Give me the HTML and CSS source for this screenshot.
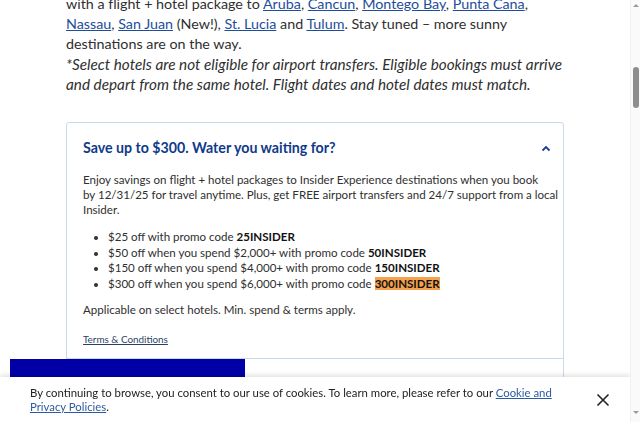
FILE: index.html
```html
<!DOCTYPE html>
<html lang="en">
<head>
<meta charset="utf-8">
<title>Insider Experience</title>
<link rel="stylesheet" href="styles.css">
</head>
<body>
<div class="page">
  <main class="content">
    <p class="intro">with a flight + hotel package to <a href="#">Aruba</a>, <a href="#">Cancun</a>, <a href="#">Montego Bay</a>, <a href="#">Punta Cana</a>, <a href="#">Nassau</a>, <a href="#">San Juan</a> (New!), <a href="#">St. Lucia</a> and <a href="#">Tulum</a>. Stay tuned – more sunny destinations are on the way.</p>
    <p class="note">*Select hotels are not eligible for airport transfers. Eligible bookings must arrive and depart from the same hotel. Flight dates and hotel dates must match.</p>

    <section class="accordion">
      <div class="acc-item">
        <div class="acc-head">
          <h2>Save up to $300. Water you waiting for?</h2>
          <svg class="chev" width="10" height="7" viewBox="0 0 10 7"><path d="M1.5 5.5 L5 2 L8.5 5.5" fill="none" stroke="#1a3f8f" stroke-width="1.8"/></svg>
        </div>
        <div class="acc-body">
          <p>Enjoy savings on flight + hotel packages to Insider Experience destinations when you book<br>by 12/31/25 for travel anytime. Plus, get FREE airport transfers and 24/7 support from a local Insider.</p>
          <ul>
            <li>$25 off with promo code <b>25INSIDER</b></li>
            <li>$50 off when you spend $2,000+ with promo code <b>50INSIDER</b></li>
            <li>$150 off when you spend $4,000+ with promo code <b>150INSIDER</b></li>
            <li>$300 off when you spend $6,000+ with promo code <b class="hl">300INSIDER</b></li>
          </ul>
          <p>Applicable on select hotels. Min. spend &amp; terms apply.</p>
          <a class="terms" href="#">Terms &amp; Conditions</a>
        </div>
      </div>
      <div class="acc-item next"></div>
    </section>
  </main>
</div>

<div class="chat-btn"></div>

<div class="cookie">
  <p>By continuing to browse, you consent to our use of cookies. To learn more, please refer to our <a href="#">Cookie and Privacy Policies</a>.</p>
  <button class="close" aria-label="Close">
    <svg width="14" height="14" viewBox="0 0 14 14"><path d="M1.5 1.5 L12.5 12.5 M12.5 1.5 L1.5 12.5" stroke="#222" stroke-width="1.6" fill="none"/></svg>
  </button>
</div>

<div class="scrollbar">
  <span class="arrow up"></span>
  <span class="thumb"></span>
  <span class="arrow down"></span>
</div>
</body>
</html>
```

FILE: styles.css
```css
* { box-sizing: border-box; }
html, body {
  margin: 0;
  padding: 0;
  height: 100%;
  overflow: hidden;
  background: #fff;
}
body {
  font-family: Lato, "Open Sans", sans-serif;
  color: #2f2f2f;
}
.page {
  width: 630px;
}
.content {
  margin-top: -6px;
  padding-left: 66px;
  width: 572px;
}
.content p { margin: 0; }
.intro {
  font-size: 14.3px;
  line-height: 20px;
}
.intro a {
  color: #1e4d9b;
}
.note {
  margin-top: 7px;
  font-size: 15.3px;
  line-height: 20px;
  font-style: italic;
}
.accordion {
  margin-top: 28px;
  width: 498px;
}
.acc-item {
  border: 1px solid #c8dbec;
  border-radius: 3px 3px 0 0;
  padding: 15px 0 12px 16px;
}
.acc-item.next {
  border-top: 1px solid #c8dbec;
  border-bottom: none;
  border-radius: 0;
  margin-top: -1px;
  height: 40px;
}
.acc-head {
  display: flex;
  align-items: center;
  justify-content: space-between;
}
.acc-head h2 {
  margin: 0;
  font-size: 14.2px;
  line-height: 20px;
  font-weight: 700;
  color: #0f3a8a;
}
.chev { margin-right: 12px; }
.acc-body {
  margin-top: 14px;
  font-size: 11.55px;
  line-height: 15px;
}
.acc-body ul {
  margin: 12px 0 11px;
  padding-left: 25px;
  line-height: 15.5px;
}
.acc-body b { font-weight: 700; color: #111; }
.hl { background: #f6a24c; }
.terms {
  display: inline-block;
  margin-top: 15px;
  font-size: 9.9px;
  line-height: 14px;
  color: #2c3f66;
}
.chat-btn {
  position: fixed;
  left: 10px;
  top: 359px;
  width: 235px;
  height: 19px;
  background: #0000a6;
}
.cookie {
  position: fixed;
  left: 0;
  bottom: 0;
  width: 630px;
  height: 45px;
  background: #fff;
  box-shadow: 0 -2px 5px rgba(0,0,0,0.12);
  display: flex;
  align-items: center;
  padding: 0 0 0 30px;
}
.cookie p {
  margin: 0;
  width: 530px;
  font-size: 11.35px;
  line-height: 14px;
  color: #222;
}
.cookie a { color: #2c5aa0; }
.close {
  margin-left: 36px;
  border: 0;
  background: none;
  padding: 0;
  display: flex;
}
.scrollbar {
  position: fixed;
  top: 0;
  right: 0;
  width: 10px;
  height: 100%;
  background: #fafafa;
  border-left: 1px solid #f0f0f0;
}
.thumb {
  position: absolute;
  left: 2px;
  top: 67px;
  width: 6px;
  height: 41px;
  background: #8e8e8e;
  border-radius: 3px;
}
.arrow {
  position: absolute;
  left: 2px;
  width: 0;
  height: 0;
  border-left: 3px solid transparent;
  border-right: 3px solid transparent;
}
.arrow.up { top: 4px; border-bottom: 3px solid #9a9a9a; }
.arrow.down { bottom: 8px; border-top: 3px solid #9a9a9a; }
```
